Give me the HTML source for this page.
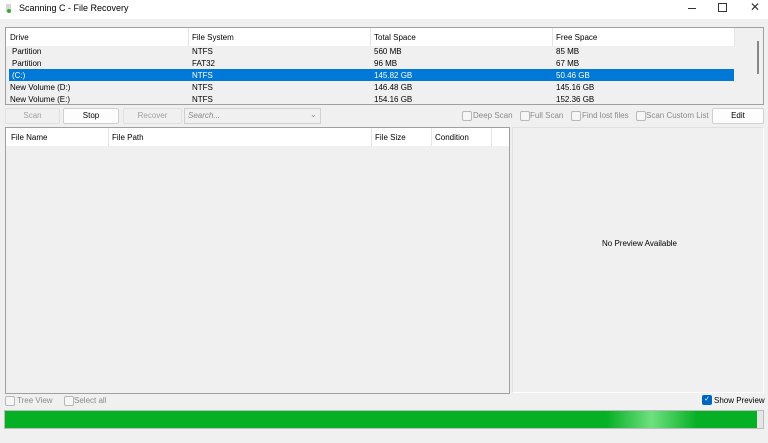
<!DOCTYPE html><html><head><style>
body{margin:0;width:768px;height:443px;background:#f0f0f0;font-family:"Liberation Sans",sans-serif;font-size:8px;color:#000;position:relative;overflow:hidden}
.a{position:absolute;white-space:nowrap}
.btn{position:absolute;height:14px;border:1px solid #d0d0d0;border-radius:2px;background:#fdfdfd;text-align:center;line-height:14px;font-size:8px}
.dis{background:#f0f0f0;color:#a0a0a0;border-color:#e0e0e0}
.cb{position:absolute;width:8px;height:8px;border:1px solid #b8b8b8;border-radius:2px;background:#f6f6f6}
.g{color:#8a8a8a}
.sep{position:absolute;width:1px;background:#e5e5e5}
</style></head><body>
<div class="a" style="left:0;top:0;width:768px;height:19px;background:#fff"></div>
<div class="a" style="left:6px;top:4px;width:5px;height:8px;background:#d8d8d8"></div>
<div class="a" style="left:7px;top:9px;width:4px;height:4px;background:#3a3;border-radius:2px"></div>
<div class="a" style="left:19px;top:3px;font-size:9px">Scanning C - File Recovery</div>
<div class="a" style="left:688px;top:8px;width:8px;height:1px;background:#333"></div>
<div class="a" style="left:718px;top:3px;width:7px;height:7px;border:1px solid #333"></div>
<div class="a" style="left:750px;top:0px;font-size:12px;color:#333">✕</div>

<div class="a" style="left:5px;top:27px;width:757px;height:76px;border:1px solid #a0a0a0;background:#f0f0f0;overflow:hidden">
<div class="a" style="left:0;top:0;width:728px;height:18px;background:#fff"></div>
<div class="sep" style="left:182px;top:0;height:18px"></div>
<div class="sep" style="left:364px;top:0;height:18px"></div>
<div class="sep" style="left:546px;top:0;height:18px"></div>
<div class="sep" style="left:728px;top:0;height:18px"></div>
<div class="a" style="left:4px;top:5px">Drive</div><div class="a" style="left:186px;top:5px">File System</div><div class="a" style="left:368px;top:5px">Total Space</div><div class="a" style="left:550px;top:5px">Free Space</div>
<div class="a" style="left:3px;top:41px;width:725px;height:12px;background:#0078d7"></div>
<div class="a" style="left:6px;top:19px">Partition</div><div class="a" style="left:186px;top:19px">NTFS</div><div class="a" style="left:368px;top:19px">560 MB</div><div class="a" style="left:550px;top:19px">85 MB</div>
<div class="a" style="left:6px;top:31px">Partition</div><div class="a" style="left:186px;top:31px">FAT32</div><div class="a" style="left:368px;top:31px">96 MB</div><div class="a" style="left:550px;top:31px">67 MB</div>
<div class="a" style="left:6px;top:43px;color:#fff">(C:)</div><div class="a" style="left:186px;top:43px;color:#fff">NTFS</div><div class="a" style="left:368px;top:43px;color:#fff">145.82 GB</div><div class="a" style="left:550px;top:43px;color:#fff">50.46 GB</div>
<div class="a" style="left:4px;top:55px">New Volume (D:)</div><div class="a" style="left:186px;top:55px">NTFS</div><div class="a" style="left:368px;top:55px">146.48 GB</div><div class="a" style="left:550px;top:55px">145.16 GB</div>
<div class="a" style="left:4px;top:67px">New Volume (E:)</div><div class="a" style="left:186px;top:67px">NTFS</div><div class="a" style="left:368px;top:67px">154.16 GB</div><div class="a" style="left:550px;top:67px">152.36 GB</div>
<div class="a" style="left:751px;top:13px;width:2px;height:33px;background:#888"></div>
</div>

<div class="btn dis" style="left:5px;top:108px;width:53px">Scan</div>
<div class="btn" style="left:63px;top:108px;width:54px">Stop</div>
<div class="btn dis" style="left:123px;top:108px;width:57px">Recover</div>
<div class="a" style="left:184px;top:108px;width:135px;height:14px;border:1px solid #d0d0d0;background:#f0f0f0"><span class="a g" style="left:3px;top:2px;font-style:italic">Search...</span><span class="a g" style="left:125px;top:1px">⌄</span></div>
<div class="cb" style="left:462px;top:111px"></div><div class="a g" style="left:473px;top:111px">Deep Scan</div>
<div class="cb" style="left:520px;top:111px"></div><div class="a g" style="left:530px;top:111px">Full Scan</div>
<div class="cb" style="left:571px;top:111px"></div><div class="a g" style="left:582px;top:111px">Find lost files</div>
<div class="cb" style="left:636px;top:111px"></div><div class="a g" style="left:646px;top:111px">Scan Custom List</div>
<div class="btn" style="left:712px;top:108px;width:50px">Edit</div>

<div class="a" style="left:5px;top:127px;width:503px;height:265px;border:1px solid #a0a0a0;background:#f0f0f0">
<div class="a" style="left:0;top:0;width:503px;height:18px;background:#fff"></div>
<div class="sep" style="left:102px;top:0;height:18px"></div><div class="sep" style="left:365px;top:0;height:18px"></div><div class="sep" style="left:425px;top:0;height:18px"></div><div class="sep" style="left:485px;top:0;height:18px"></div>
<div class="a" style="left:5px;top:5px">File Name</div><div class="a" style="left:106px;top:5px">File Path</div><div class="a" style="left:369px;top:5px">File Size</div><div class="a" style="left:429px;top:5px">Condition</div>
</div>
<div class="a" style="left:512px;top:127px;width:250px;height:264px;border:1px solid #fff;border-left-color:#e0e0e0;border-top-color:#e0e0e0"></div>
<div class="a" style="left:602px;top:239px">No Preview Available</div>

<div class="cb" style="left:5px;top:396px"></div><div class="a g" style="left:17px;top:396px">Tree View</div>
<div class="cb" style="left:64px;top:396px"></div><div class="a g" style="left:74px;top:396px">Select all</div>
<div class="a" style="left:702px;top:395px;width:10px;height:10px;background:#0067c0;border-radius:2px;color:#fff;font-size:7px;text-align:center;line-height:10px">✓</div><div class="a" style="left:714px;top:396px">Show Preview</div>

<div class="a" style="left:4px;top:410px;width:758px;height:17px;border:1px solid #bcbcbc;background:#e6e6e6">
<div class="a" style="left:0;top:0;width:752px;height:17px;background:linear-gradient(90deg,#06b025 0,#06b025 80%,#6fe07f 86%,#06b025 92%,#06b025 100%)"></div></div>
</body></html>
